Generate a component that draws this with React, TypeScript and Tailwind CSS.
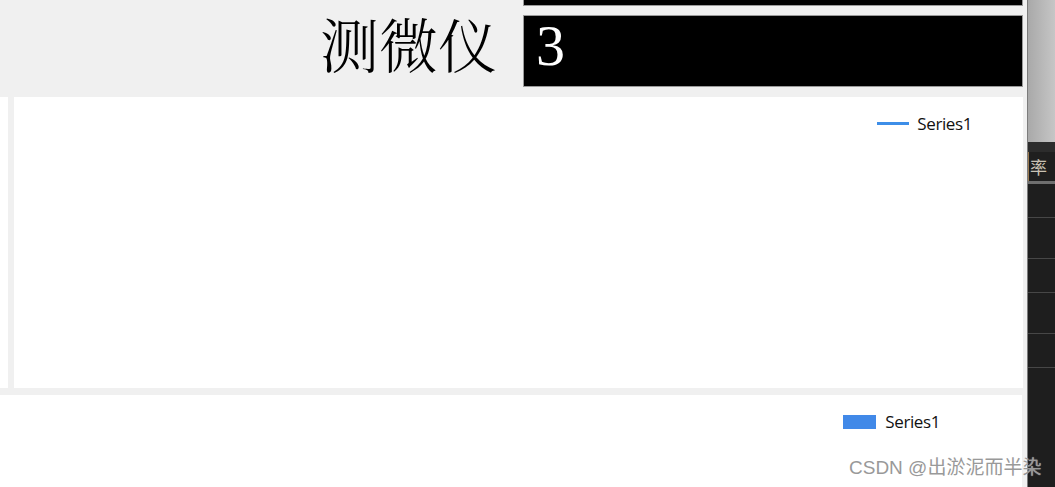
import React from "react";

const sans = { fontFamily: '"Segoe UI", "Open Sans", "Noto Sans", "Liberation Sans", sans-serif' };

function LineLegend() {
  return (
    <div className="flex items-center gap-[8px]">
      <div className="w-[32px] h-[3px] bg-[#3d8ee8]" />
      <span className="text-[17px] leading-none text-[#111] tracking-[-0.4px]" style={sans}>Series1</span>
    </div>
  );
}

function BarLegend() {
  return (
    <div className="flex items-center gap-[9px]">
      <div className="w-[33px] h-[14px] bg-[#4189e8]" />
      <span className="text-[17px] leading-none text-[#111] tracking-[-0.4px]" style={sans}>Series1</span>
    </div>
  );
}

export default function App() {
  return (
    <div className="w-[1055px] h-[487px] flex overflow-hidden relative bg-[#f0f0f0]">
      {/* main area */}
      <div className="w-[1027px] flex flex-col">
        {/* top */}
        <div className="h-[97px] flex">
          <div className="w-[523px] flex items-start justify-end pr-[26px] pt-[7px]">
            <span
              className="text-[59px] leading-[72px] text-black"
              style={{ fontFamily: '"Noto Serif CJK SC", "Noto Sans CJK SC", serif', fontWeight: 300 }}
            >
              测微仪
            </span>
          </div>
          <div className="w-[500px] flex flex-col">
            <div className="h-[6px] bg-black border-x border-b border-[#9a9a9a]" />
            <div className="mt-[9px] h-[72px] bg-black border border-[#9a9a9a] flex items-start pt-[1px] pl-[12px]">
              <span
                className="text-white text-[58px] leading-none"
                style={{ fontFamily: '"Liberation Serif", "DejaVu Serif", "Noto Serif", serif' }}
              >
                3
              </span>
            </div>
          </div>
        </div>
        {/* chart 1 */}
        <div className="h-[291px] flex pr-[4px]">
          <div className="w-[8px] bg-white" />
          <div className="w-[6px]" />
          <div className="flex-1 bg-white flex justify-end items-start pt-[18px] pr-[51px]">
            <LineLegend />
          </div>
        </div>
        <div className="h-[7px]" />
        {/* chart 2 */}
        <div className="flex-1 bg-white mr-[5px] flex justify-end items-start pt-[18px] pr-[82px]">
          <BarLegend />
        </div>
      </div>

      {/* right dark panel */}
      <div className="w-[28px] flex flex-col border-l border-[#7c7c7c]">
        <div className="h-[142px] bg-gradient-to-r from-[#a9a9a9] to-[#c6c6c6]" />
        <div className="h-[10px] bg-[#2c2c2c]" />
        <div className="h-[29px] bg-[#1f1f1f] flex items-center pl-[1px] border-l border-[#9a7a50]">
          <span
            className="text-[17px] leading-none text-[#c9c2b4]"
            style={{ fontFamily: '"Noto Sans CJK SC", sans-serif' }}
          >
            率
          </span>
        </div>
        <div className="h-[3px] bg-[#6f6f6f]" />
        <div className="h-[34px] bg-[#1e1e1e] border-b border-[#474747]" />
        <div className="h-[41px] bg-[#1e1e1e] border-b border-[#474747]" />
        <div className="h-[34px] bg-[#1e1e1e] border-b border-[#474747]" />
        <div className="h-[41px] bg-[#1e1e1e] border-b border-[#474747]" />
        <div className="h-[34px] bg-[#1e1e1e] border-b border-[#474747]" />
        <div className="flex-1 bg-[#1e1e1e]" />
      </div>

      {/* watermark */}
      <div
        className="absolute left-[849px] top-[455px] text-[19px] leading-[26px] text-[#999999] whitespace-nowrap"
        style={{ fontFamily: '"Liberation Sans", "Noto Sans CJK SC", sans-serif', textShadow: "0 0 1px rgba(255,255,255,0.6)" }}
      >
        CSDN @出淤泥而半染
      </div>
    </div>
  );
}
